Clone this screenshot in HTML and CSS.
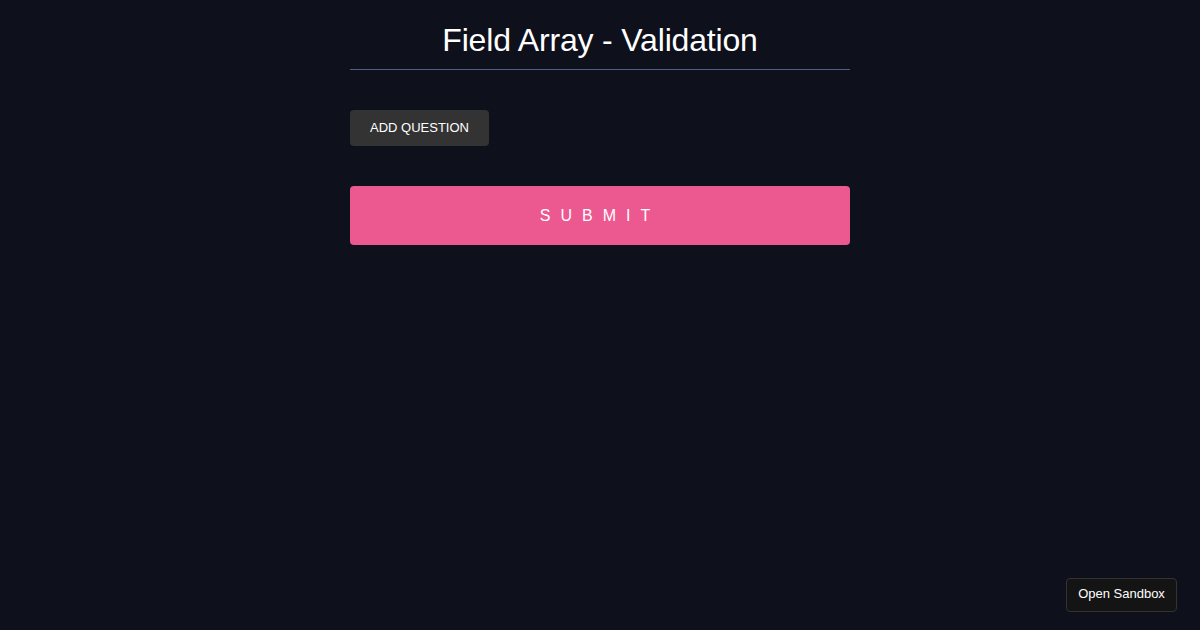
FILE: index.html
```html
<!DOCTYPE html>
<html>
<head>
<meta charset="utf-8">
<link rel="stylesheet" href="styles.css">
</head>
<body>
<form class="form">
  <h1 class="title">Field Array - Validation</h1>
  <ul class="list"></ul>
  <section class="actions">
    <button type="button" class="add-btn">ADD QUESTION</button>
  </section>
  <button type="submit" class="submit-btn">SUBMIT</button>
</form>
<button type="button" class="sandbox-btn">Open Sandbox</button>
</body>
</html>
```
FILE: styles.css
```css
html, body {
  margin: 0;
  padding: 0;
  background: #0e101c;
  height: 100%;
}
body {
  font-family: "Liberation Sans", Arial, sans-serif;
  color: #fff;
  position: relative;
}
.form {
  width: 500px;
  margin: 0 auto;
  padding-top: 20px;
}
.title {
  margin: 0;
  font-weight: 400;
  font-size: 32px;
  letter-spacing: -0.17px;
  line-height: 40px;
  text-align: center;
  padding-bottom: 9px;
  border-bottom: 1px solid #505d88;
}
.list {
  margin: 0;
  padding: 0;
  list-style: none;
}
.actions {
  margin-top: 40px;
}
.add-btn {
  display: block;
  background: #333;
  color: #fff;
  border: 0;
  border-radius: 4px;
  height: 36px;
  width: 139px;
  padding: 0 0 2px;
  font-family: "Liberation Sans", Arial, sans-serif;
  font-size: 13px;
  text-transform: uppercase;
}
.submit-btn {
  display: block;
  margin-top: 40px;
  width: 100%;
  height: 59px;
  background: #ec5990;
  color: #fff;
  border: 0;
  border-radius: 4px;
  font-family: "Liberation Sans", Arial, sans-serif;
  font-size: 16px;
  letter-spacing: 10px;
}
.sandbox-btn {
  position: absolute;
  right: 23px;
  bottom: 18px;
  height: 34px;
  width: 111px;
  padding: 0 0 3px;
  background: #141414;
  color: #fff;
  border: 1px solid #333;
  border-radius: 4px;
  font-family: "Liberation Sans", Arial, sans-serif;
  font-size: 13px;
}
```
